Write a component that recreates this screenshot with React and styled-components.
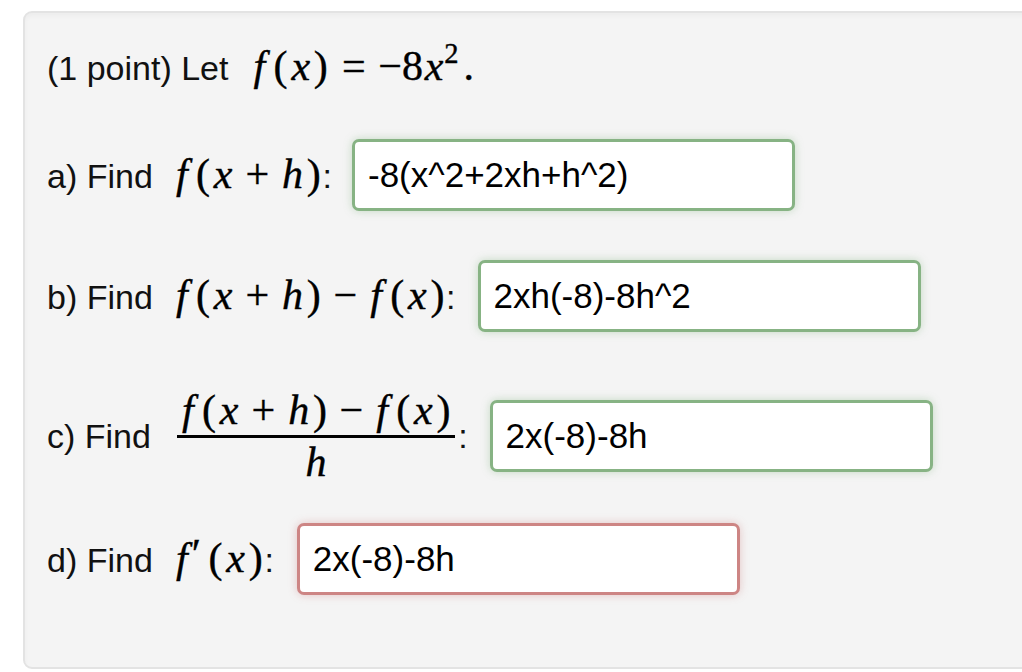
import React from 'react';
import styled, { createGlobalStyle, css } from 'styled-components';

const Global = createGlobalStyle`
  html, body {
    margin: 0;
    padding: 0;
    background: #fff;
    overflow: hidden;
  }
`;

const Panel = styled.div`
  box-sizing: border-box;
  margin: 11px 0 0 23px;
  width: 1040px;
  height: 658px;
  padding: 32px 0 0 22px;
  background: #f4f4f4;
  border: 2px solid #e3e3e3;
  border-radius: 9px;
  box-shadow: inset 0 3px 4px rgba(0, 0, 0, 0.03);
  font-family: 'Liberation Sans', Arial, Helvetica, sans-serif;
  font-size: 34px;
  color: #111;
`;

const Row = styled.div`
  display: flex;
  align-items: center;
  height: ${(p) => p.$h}px;
  margin-top: ${(p) => p.$top || 0}px;
  white-space: nowrap;
`;

const Prompt = styled.div`
  line-height: 44px;
  ${(p) =>
    p.$frac &&
    css`
      display: flex;
      align-items: center;
    `}
`;

const mathFont = css`
  font-family: 'Liberation Serif', 'Times New Roman', serif;
  font-size: 42px;
  color: #000;
  -webkit-text-stroke: 0.4px #000;
`;

const Math = styled.span`
  display: inline-block;
  margin-left: ${(p) => p.$ml ?? 21}px;
  ${mathFont}
`;

const V = styled.span`
  font-style: italic;
  padding: 0 ${(p) => p.$r ?? 0.05}em 0 ${(p) => p.$l ?? 0.05}em;
`;

const P = styled.span`
  padding: 0 0.04em;
`;

const Op = styled.span`
  padding: 0 ${(p) => (p.$rel ? 0.3 : 0.26)}em;
`;

const Sup = styled.sup`
  font-size: 0.68em;
  vertical-align: 0.58em;
  line-height: 0;
  padding-right: 0.18em;
`;

const Prime = styled.span`
  display: inline-block;
  transform: translateY(-0.1em);
  padding: 0 0.14em 0 0.06em;
`;

const Colon = styled.span`
  font-family: 'Liberation Sans', Arial, sans-serif;
  font-size: 34px;
  -webkit-text-stroke: 0;
`;

const Frac = styled.span`
  display: inline-flex;
  flex-direction: column;
  align-items: center;
  margin: 0 3px 0 26px;
  ${mathFont}
`;

const Num = styled.span`
  padding: 0 3px;
  line-height: 40px;
`;

const Bar = styled.span`
  align-self: stretch;
  height: 3px;
  margin: 5px 0 3px;
  background: #000;
`;

const Den = styled.span`
  line-height: 42px;
`;

const Answer = styled.div`
  box-sizing: border-box;
  width: 443px;
  height: 72px;
  margin-left: ${(p) => p.$gap ?? 22}px;
  padding: 0 13px;
  display: flex;
  align-items: center;
  background: #fff;
  border-radius: 7px;
  font-family: 'Liberation Sans', Arial, sans-serif;
  font-size: 35px;
  color: #000;
  ${(p) =>
    p.$ok
      ? css`
          border: 3px solid #87b384;
          box-shadow: 0 0 9px rgba(110, 170, 105, 0.35);
        `
      : css`
          border: 3px solid #cd8584;
          box-shadow: 0 0 9px rgba(200, 110, 110, 0.35);
        `}
`;

const F = () => (
  <V $l={0.05} $r={0.16}>
    f
  </V>
);

const FxH = () => (
  <>
    <F />
    <P>(</P>
    <V>x</V>
    <Op>+</Op>
    <V>h</V>
    <P>)</P>
  </>
);

const Fx = () => (
  <>
    <F />
    <P>(</P>
    <V>x</V>
    <P>)</P>
  </>
);

export default function App() {
  return (
    <>
      <Global />
      <Panel>
        <Row $h={44}>
          <Prompt>
            (1 point) Let
            <Math $ml={23}>
              <Fx />
              <Op $rel>=</Op>
              −8
              <V $l={0.04} $r={0.02}>x</V>
              <Sup>2</Sup>.
            </Math>
          </Prompt>
        </Row>

        <Row $h={72} $top={50}>
          <Prompt>
            a) Find
            <Math>
              <FxH />
            </Math>
            <Colon>:</Colon>
          </Prompt>
          <Answer $ok $gap={20}>
            -8(x^2+2xh+h^2)
          </Answer>
        </Row>

        <Row $h={72} $top={49}>
          <Prompt>
            b) Find
            <Math>
              <FxH />
              <Op>−</Op>
              <Fx />
            </Math>
            <Colon>:</Colon>
          </Prompt>
          <Answer $ok>2xh(-8)-8h^2</Answer>
        </Row>

        <Row $h={86} $top={61}>
          <Prompt $frac>
            c) Find
            <Frac>
              <Num>
                <FxH />
                <Op>−</Op>
                <Fx />
              </Num>
              <Bar />
              <Den>
                <V>h</V>
              </Den>
            </Frac>
            <Colon>:</Colon>
          </Prompt>
          <Answer $ok $gap={22}>
            2x(-8)-8h
          </Answer>
        </Row>

        <Row $h={72} $top={44}>
          <Prompt>
            d) Find
            <Math>
              <V $l={0.05} $r={0.04}>
                f
              </V>
              <Prime>′</Prime>
              <P>(</P>
              <V>x</V>
              <P>)</P>
            </Math>
            <Colon>:</Colon>
          </Prompt>
          <Answer $gap={23}>2x(-8)-8h</Answer>
        </Row>
      </Panel>
    </>
  );
}
